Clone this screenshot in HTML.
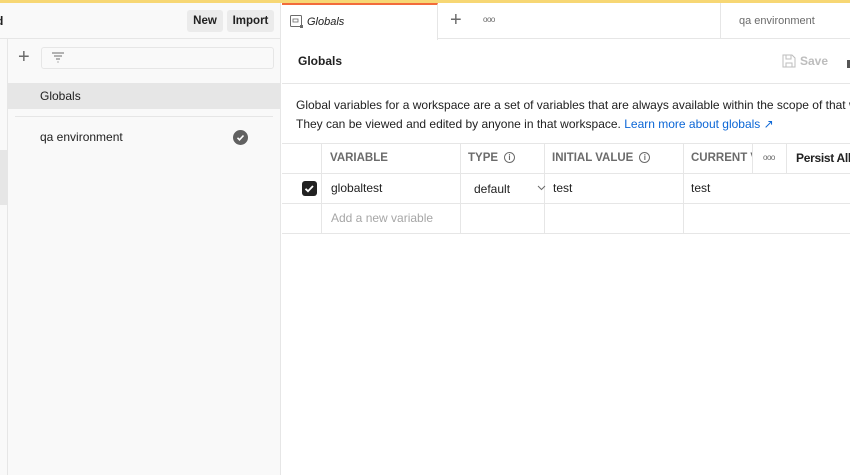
<!DOCTYPE html>
<html><head><style>
*{box-sizing:border-box;margin:0;padding:0}
body{width:850px;height:475px;overflow:hidden;font-family:"Liberation Sans",Arial,sans-serif;font-size:12px;color:#212121;background:#fff;position:relative}
.a{position:absolute}
.btn{position:absolute;top:10px;height:22px;background:#ebebeb;border-radius:3px;font-weight:bold;font-size:11.5px;line-height:22px;text-align:center;color:#212121}
.th{position:absolute;top:144px;height:30px;line-height:28px;font-weight:bold;color:#6b6b6b;font-size:11.5px}
.vl{position:absolute;width:1px;background:#e6e6e6}
.hl{position:absolute;height:1px;background:#e6e6e6}
.info{display:inline-block;width:11px;height:11px;border:1px solid #6b6b6b;border-radius:50%;font-size:8px;line-height:9px;text-align:center;vertical-align:middle;margin-left:6px;font-weight:bold}
.dots{position:absolute;font-size:8px;color:#6b6b6b;letter-spacing:-0.5px}
</style></head><body>
<div class="a" style="left:0;top:0;width:850px;height:3px;background:#f7d774"></div>
<div class="a" style="left:0;top:3px;width:281px;height:472px;background:#f9f9f9;border-right:1px solid #e6e6e6"></div>
<div class="a" style="left:0;top:39px;width:8px;height:436px;border-right:1px solid #e6e6e6"></div>
<div class="a" style="left:0;top:150px;width:7px;height:55px;background:#e6e6e6"></div>
<div class="hl" style="left:0;top:38px;width:281px"></div>
<div class="a" style="left:-4px;top:14px;font-weight:bold;font-size:12px">d</div>
<div class="btn" style="left:187px;width:36px">New</div>
<div class="btn" style="left:227px;width:47px">Import</div>
<div class="a" style="left:18px;top:47px;font-size:20px;color:#6b6b6b;line-height:20px">+</div>
<div class="a" style="left:41px;top:47px;width:233px;height:22px;border:1px solid #e6e6e6;border-radius:3px;background:#f9f9f9"></div>
<svg class="a" style="left:51px;top:51px" width="14" height="12"><path d="M1 2h12M3 5h8M5 8h4M6.5 11h1" stroke="#6b6b6b" stroke-width="1"/></svg>
<div class="a" style="left:8px;top:83px;width:272px;height:26px;background:#e6e6e6"></div>
<div class="a" style="left:40px;top:89px;font-size:12px">Globals</div>
<div class="hl" style="left:15px;top:116px;width:258px"></div>
<div class="a" style="left:40px;top:130px;font-size:12px">qa environment</div>
<div class="a" style="left:233px;top:130px;width:15px;height:15px;border-radius:50%;background:#616161"></div>
<svg class="a" style="left:233px;top:130px" width="15" height="15"><path d="M4.5 7.8l2 2 4-4.3" stroke="#fff" stroke-width="1.6" fill="none"/></svg>
<div class="a" style="left:282px;top:3px;width:568px;height:36px;background:#fff;border-bottom:1px solid #e6e6e6"></div>
<div class="a" style="left:282px;top:3px;width:156px;height:37px;background:#fff;border-right:1px solid #e6e6e6;border-top:2px solid #f26b3a"></div>
<svg class="a" style="left:290px;top:15px" width="14" height="14"><rect x="0.5" y="0.5" width="11" height="11" rx="1" fill="none" stroke="#6b6b6b"/><rect x="3" y="4" width="5" height="3" fill="none" stroke="#6b6b6b" stroke-width=".8"/><rect x="10" y="10" width="3" height="3" fill="#6b6b6b"/></svg>
<div class="a" style="left:307px;top:16px;font-style:italic;font-size:11px;color:#212121">Globals</div>
<div class="a" style="left:450px;top:10px;font-size:20px;color:#6b6b6b;line-height:20px">+</div>
<div class="dots" style="left:483px;top:15px">ooo</div>
<div class="a" style="left:720px;top:3px;width:130px;height:36px;background:#fff;border-left:1px solid #e6e6e6;border-bottom:1px solid #e6e6e6"></div>
<div class="a" style="left:739px;top:15px;font-size:11px;color:#6b6b6b">qa environment</div>
<div class="a" style="left:298px;top:54px;font-weight:bold;font-size:12px">Globals</div>
<svg class="a" style="left:782px;top:54px" width="14" height="14"><path d="M1 1h9l3 3v9H1z M4 1v4h5V1 M4 13V9h6v4" fill="none" stroke="#bdbdbd"/></svg>
<div class="a" style="left:800px;top:54px;font-weight:bold;color:#bdbdbd;font-size:12px">Save</div>
<div class="a" style="left:847px;top:60px;width:3px;height:8px;background:#555"></div>
<div class="hl" style="left:282px;top:83px;width:568px"></div>
<div class="a" style="left:296px;top:96px;font-size:12px;line-height:19px;white-space:nowrap;color:#212121">Global variables for a workspace are a set of variables that are always available within the scope of that wo<br>They can be viewed and edited by anyone in that workspace. <span style="color:#0b66d6">Learn more about globals ↗</span></div>
<div class="hl" style="left:282px;top:143px;width:568px"></div>
<div class="hl" style="left:282px;top:173px;width:568px"></div>
<div class="hl" style="left:282px;top:203px;width:568px"></div>
<div class="hl" style="left:282px;top:233px;width:568px"></div>
<div class="vl" style="left:321px;top:143px;height:91px"></div>
<div class="vl" style="left:460px;top:143px;height:91px"></div>
<div class="vl" style="left:544px;top:143px;height:91px"></div>
<div class="vl" style="left:683px;top:143px;height:91px"></div>
<div class="vl" style="left:752px;top:143px;height:30px"></div>
<div class="vl" style="left:786px;top:143px;height:30px"></div>
<div class="th" style="left:330px">VARIABLE</div>
<div class="th" style="left:468px">TYPE<span class="info">i</span></div>
<div class="th" style="left:552px">INITIAL VALUE<span class="info">i</span></div>
<div class="th" style="left:691px;width:61px;overflow:hidden;white-space:nowrap">CURRENT VALUE</div>
<div class="dots" style="left:763px;top:153px">ooo</div>
<div class="a" style="left:796px;top:151px;font-weight:bold;font-size:12px;white-space:nowrap;letter-spacing:-0.3px">Persist All</div>
<div class="a" style="left:302px;top:181px;width:15px;height:15px;border-radius:3px;background:#212121"></div>
<svg class="a" style="left:302px;top:181px" width="15" height="15"><path d="M3.5 7.8l2.5 2.4 5-5.2" stroke="#fff" stroke-width="1.8" fill="none"/></svg>
<div class="a" style="left:331px;top:181px">globaltest</div>
<div class="a" style="left:474px;top:182px">default</div>
<svg class="a" style="left:537px;top:185px" width="9" height="6"><path d="M1 1l3.5 3.5L8 1" stroke="#6b6b6b" fill="none"/></svg>
<div class="a" style="left:553px;top:181px">test</div>
<div class="a" style="left:691px;top:181px">test</div>
<div class="a" style="left:331px;top:211px;color:#a6a6a6">Add a new variable</div>
</body></html>
